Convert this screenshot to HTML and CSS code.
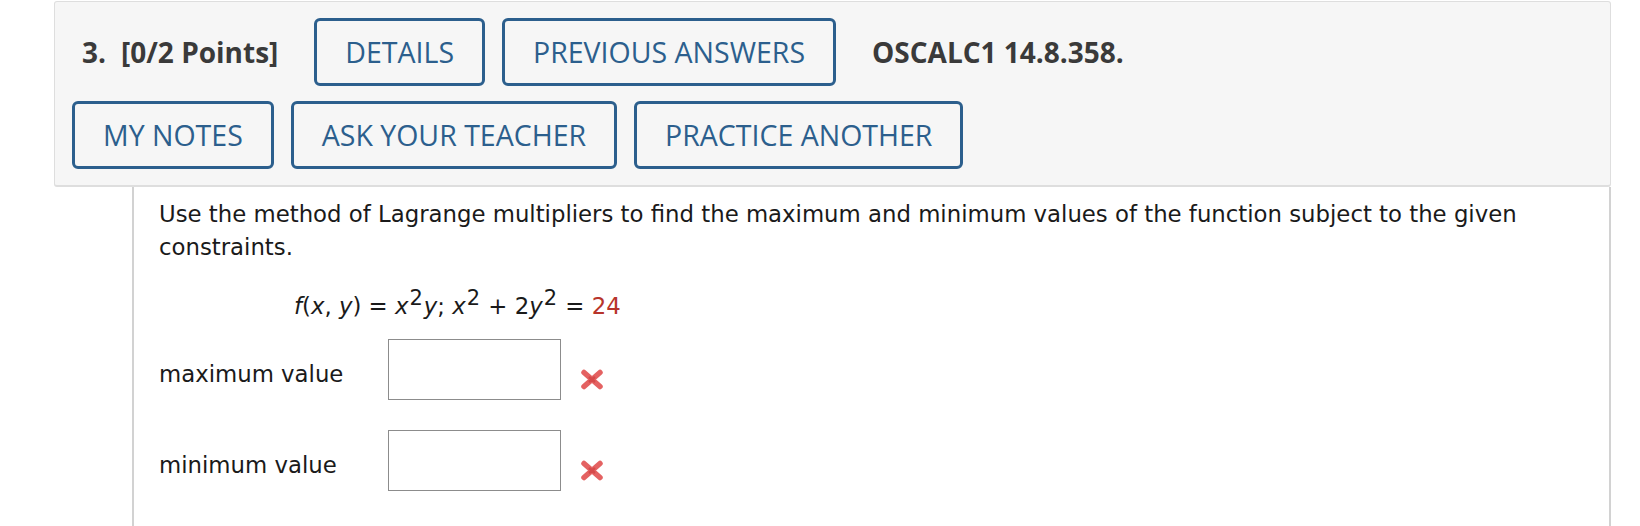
FILE: index.html
```html
<!DOCTYPE html>
<html lang="en">
<head>
  <meta charset="UTF-8">
  <title>Question 3</title>
  <link rel="stylesheet" href="styles.css">
</head>
<body>

  <div class="question">
    <!-- header with the question number and the action buttons -->
    <div class="q-header">
      <div class="q-row first">
        <span class="q-num">3.</span>
        <span class="q-points">[0/2 Points]</span>
        <button class="q-btn">DETAILS</button>
        <button class="q-btn">PREVIOUS ANSWERS</button>
        <span class="q-code">OSCALC1 14.8.358.</span>
      </div>
      <div class="q-row">
        <button class="q-btn">MY NOTES</button>
        <button class="q-btn">ASK YOUR TEACHER</button>
        <button class="q-btn">PRACTICE ANOTHER</button>
      </div>
    </div>

    <!-- question body -->
    <div class="q-body">
      <p class="prompt">Use the method of Lagrange multipliers to find the maximum and minimum values of the function subject to the given constraints.</p>

      <div class="formula"><i>f</i>(<i>x</i>, <i>y</i>) = <i>x</i><sup>2</sup><i>y</i>; <i>x</i><sup>2</sup> + 2<i>y</i><sup>2</sup> = <span class="given">24</span></div>

      <div class="answer-row">
        <label for="maxValue">maximum value</label>
        <input type="text" id="maxValue">
        <svg class="wrong" width="24" height="21" viewBox="0 0 24 21">
          <path d="M4 3.5 L20 17.5 M20 3.5 L4 17.5" stroke="#e46262" stroke-width="5.5" stroke-linecap="round"/>
          <path d="M10 8.8 L14 12.2 M14 8.8 L10 12.2" stroke="#d54a4a" stroke-width="3" stroke-linecap="round"/>
        </svg>
      </div>

      <div class="answer-row">
        <label for="minValue">minimum value</label>
        <input type="text" id="minValue">
        <svg class="wrong" width="24" height="21" viewBox="0 0 24 21">
          <path d="M4 3.5 L20 17.5 M20 3.5 L4 17.5" stroke="#e46262" stroke-width="5.5" stroke-linecap="round"/>
          <path d="M10 8.8 L14 12.2 M14 8.8 L10 12.2" stroke="#d54a4a" stroke-width="3" stroke-linecap="round"/>
        </svg>
      </div>
    </div>
  </div>

</body>
</html>
```

FILE: styles.css
```css
body {
  margin: 0;
  padding-top: 1px;
  background-color: #fff;
}

.question {
  margin-left: 54px;
  width: 1557px;
}

.q-header {
  background-color: #f6f6f6;
  border: 1px solid #dedede;
  border-bottom-width: 2px;
  border-radius: 3px;
  padding: 16px 17px 16px 17px;
  display: flex;
  flex-direction: column;
  gap: 15px;
}

.q-row {
  display: flex;
  align-items: center;
  gap: 17px;
}

.q-num,
.q-points,
.q-code {
  font-family: "Open Sans", sans-serif;
  font-size: 28px;
  font-weight: 700;
  color: #3a3a3a;
}

.q-num {
  margin-left: 10px;
  margin-right: -2px;
}

.q-points {
  margin-right: 19px;
}

.q-code {
  margin-left: 19px;
}

.q-btn {
  font-family: "Open Sans", sans-serif;
  font-size: 28.5px;
  font-weight: 500;
  color: #2c5f8d;
  background: transparent;
  border: 3px solid #2c5f8d;
  border-radius: 6px;
  height: 68px;
  padding: 0 28px;
  line-height: 62px;
  cursor: pointer;
}

.q-body {
  margin-left: 78px;
  border-left: 2px solid #d2d2d2;
  border-right: 2px solid #d2d2d2;
  padding: 11px 25px 0 25px;
  height: 340px;
  font-family: "DejaVu Sans", Verdana, sans-serif;
  font-size: 22.8px;
  line-height: 33px;
  color: #1a1a1a;
}

.prompt {
  margin: 0;
}

.formula {
  margin: 26px 0 0 135px;
}

.formula sup {
  font-size: 21px;
  line-height: 0;
  margin-left: 1px;
  margin-right: 1px;
}

.given {
  color: #b7342b;
}

.answer-row {
  display: flex;
  align-items: center;
  margin-top: 16px;
}

.answer-row + .answer-row {
  margin-top: 30px;
}

.answer-row label {
  width: 229px;
  margin-top: 10px;
}

.answer-row input {
  box-sizing: border-box;
  width: 173px;
  height: 61px;
  border: 1px solid #8c8c8c;
  background: #fff;
  margin: 0;
}

.wrong {
  margin-left: 19px;
  margin-top: 20px;
}
```
